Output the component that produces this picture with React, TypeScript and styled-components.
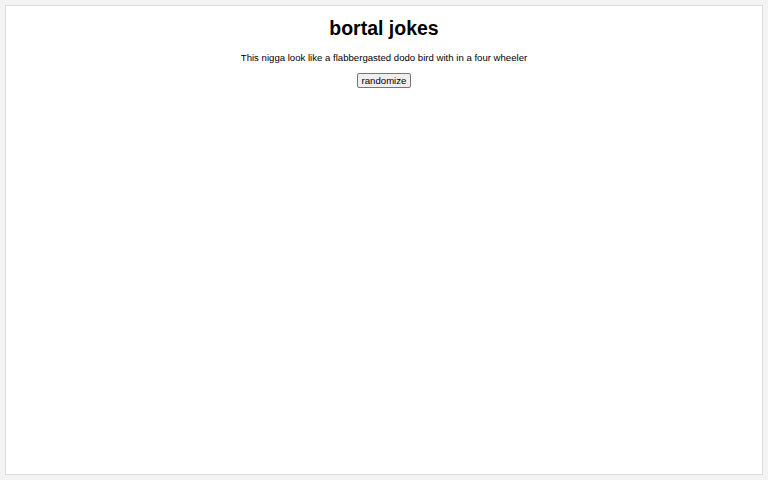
import { createGlobalStyle } from 'styled-components'
import styled from 'styled-components'

const GlobalStyle = createGlobalStyle`
  body {
    margin: 0;
    background: #f3f3f3;
    font-family: 'Liberation Sans', Arial, sans-serif;
  }
`

const Page = styled.div`
  padding: 5px;
  height: 480px;
  box-sizing: border-box;
`

const Panel = styled.main`
  height: 470px;
  box-sizing: border-box;
  background: #fff;
  border: 1px solid #dcdcdc;
  display: flex;
  flex-direction: column;
  align-items: center;
  padding-top: 11px;
`

const Title = styled.h1`
  margin: 0;
  font-size: 19.5px;
  font-weight: 700;
  color: #000;
`

const Joke = styled.p`
  margin: 12px 0 0;
  font-size: 9.6px;
  color: #000;
`

const RandomButton = styled.button`
  margin-top: 10px;
  font-family: 'Liberation Sans', Arial, sans-serif;
  font-size: 9.6px;
  padding: 1px 4px;
  background: #efefef;
  border: 1px solid #767676;
  border-radius: 2px;
  color: #000;
`

export default function App() {
  return (
    <>
      <GlobalStyle />
      <Page>
        <Panel>
          <Title>bortal jokes</Title>
          <Joke>This nigga look like a flabbergasted dodo bird with in a four wheeler</Joke>
          <RandomButton>randomize</RandomButton>
        </Panel>
      </Page>
    </>
  )
}
